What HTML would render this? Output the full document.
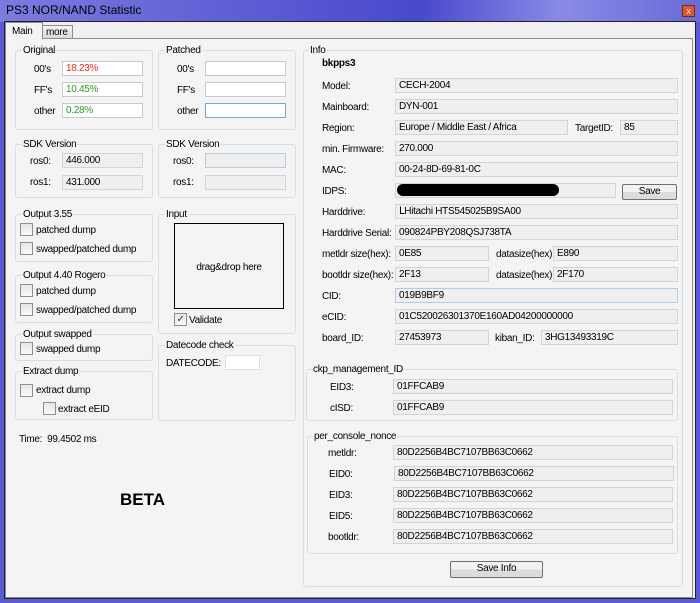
<!DOCTYPE html><html><head><style>
*{margin:0;padding:0;box-sizing:border-box}
body{width:700px;height:603px;position:relative;overflow:hidden;font-family:"Liberation Sans",sans-serif;font-size:10px;letter-spacing:-0.3px;color:#000;background:#5b5bd6}
.a{position:absolute}
.t{position:absolute;white-space:nowrap;line-height:13px}
.g{position:absolute;border:1px solid #d5dfe5;border-radius:3px}
.gl{position:absolute;top:-7px;left:6px;background:#f4f4f4;padding:0 1px;line-height:13px;white-space:nowrap}
.tb{position:absolute;height:15px;border:1px solid #c9c9c9;background:#fff;line-height:13px;padding-left:3px;white-space:nowrap;overflow:hidden}
.ro{background:#efefef;border-color:#d4d4d4}
.cb{position:absolute;width:13px;height:13px;border:1px solid #8f8f8f;background:linear-gradient(#e6e6e6,#fafafa)}
.btn{position:absolute;border:1px solid #707070;border-radius:2px;background:linear-gradient(#f2f2f2 50%,#dcdcdc 50%);text-align:center;line-height:14px}
</style></head><body>
<div class="a" style="left:0;top:0;width:700px;height:22px;background:linear-gradient(90deg,#7b7be0,#4848cc 60%,#8a8ae6 80%,#6a6ad8)"></div>
<div class="t" style="left:6px;top:4px;font-size:12px;letter-spacing:0">PS3 NOR/NAND Statistic</div>
<div class="a" style="left:682px;top:5px;width:13px;height:12px;background:#d9582f;border:1px solid #7a2a10;color:#fff;font-size:9px;text-align:center;line-height:10px">x</div>
<div class="a" style="left:4px;top:21px;width:692px;height:578px;background:#f0f0f0;border:1px solid #222"></div>
<div class="a" style="left:5px;top:38px;width:688px;height:560px;border:1px solid #898c95;background:#f4f4f4"></div>
<div class="a" style="left:5px;top:22px;width:38px;height:17px;border:1px solid #898c95;border-bottom:none;background:#f4f4f4"></div>
<div class="t" style="left:12px;top:25px">Main</div>
<div class="a" style="left:42px;top:25px;width:31px;height:13px;border:1px solid #898c95;border-bottom:none;background:linear-gradient(#f2f2f2,#dcdcdc)"></div>
<div class="t" style="left:46px;top:26px">more</div>

<div class="g" style="left:15px;top:50px;width:138px;height:80px"><span class="gl">Original</span></div>
<div class="t" style="left:34px;top:63px">00's</div><div class="tb" style="left:62px;top:61px;width:81px;color:#f22">18.23%</div>
<div class="t" style="left:34px;top:84px">FF's</div><div class="tb" style="left:62px;top:82px;width:81px;color:#2a9a2a">10.45%</div>
<div class="t" style="left:34px;top:105px">other</div><div class="tb" style="left:62px;top:103px;width:81px;color:#2a9a2a">0.28%</div>
<div class="g" style="left:158px;top:50px;width:138px;height:80px"><span class="gl">Patched</span></div>
<div class="t" style="left:177px;top:63px">00's</div><div class="tb" style="left:205px;top:61px;width:81px"></div>
<div class="t" style="left:177px;top:84px">FF's</div><div class="tb" style="left:205px;top:82px;width:81px"></div>
<div class="t" style="left:177px;top:105px">other</div><div class="tb" style="left:205px;top:103px;width:81px;border-color:#7aa7cf"></div>

<div class="g" style="left:15px;top:144px;width:138px;height:54px"><span class="gl">SDK Version</span></div>
<div class="t" style="left:30px;top:155px">ros0:</div><div class="tb ro" style="left:62px;top:153px;width:81px">446.000</div>
<div class="t" style="left:30px;top:176px">ros1:</div><div class="tb ro" style="left:62px;top:175px;width:81px">431.000</div>
<div class="g" style="left:158px;top:144px;width:138px;height:54px"><span class="gl">SDK Version</span></div>
<div class="t" style="left:173px;top:155px">ros0:</div><div class="tb ro" style="left:205px;top:153px;width:81px;border-color:#b5cbe0"></div>
<div class="t" style="left:173px;top:176px">ros1:</div><div class="tb ro" style="left:205px;top:175px;width:81px"></div>

<div class="g" style="left:15px;top:214px;width:138px;height:48px"><span class="gl">Output 3.55</span></div>
<div class="cb" style="left:20px;top:223px"></div><div class="t" style="left:36px;top:224px">patched dump</div>
<div class="cb" style="left:20px;top:242px"></div><div class="t" style="left:36px;top:243px">swapped/patched dump</div>
<div class="g" style="left:15px;top:275px;width:138px;height:48px"><span class="gl">Output 4.40 Rogero</span></div>
<div class="cb" style="left:20px;top:284px"></div><div class="t" style="left:36px;top:285px">patched dump</div>
<div class="cb" style="left:20px;top:303px"></div><div class="t" style="left:36px;top:304px">swapped/patched dump</div>
<div class="g" style="left:15px;top:334px;width:138px;height:27px"><span class="gl">Output swapped</span></div>
<div class="cb" style="left:20px;top:342px"></div><div class="t" style="left:36px;top:343px">swapped dump</div>
<div class="g" style="left:15px;top:371px;width:138px;height:49px"><span class="gl">Extract dump</span></div>
<div class="cb" style="left:20px;top:384px"></div><div class="t" style="left:36px;top:384px">extract dump</div>
<div class="cb" style="left:43px;top:402px"></div><div class="t" style="left:58px;top:403px">extract eEID</div>

<div class="g" style="left:158px;top:214px;width:138px;height:120px"><span class="gl">Input</span></div>
<div class="a" style="left:174px;top:223px;width:110px;height:86px;border:1px solid #000;background:#f4f4f4"></div>
<div class="t" style="left:174px;top:261px;width:110px;text-align:center">drag&amp;drop here</div>
<div class="cb" style="left:174px;top:313px;font-size:10px;line-height:11px;text-align:center;color:#334">✓</div><div class="t" style="left:189px;top:314px">Validate</div>
<div class="g" style="left:158px;top:345px;width:138px;height:76px"><span class="gl">Datecode check</span></div>
<div class="t" style="left:166px;top:357px">DATECODE:</div><div class="tb" style="left:225px;top:355px;width:35px;border-color:#e0e0e0"></div>

<div class="t" style="left:19px;top:433px">Time:&nbsp; 99.4502 ms</div>
<div class="t" style="left:120px;top:490px;font-size:17px;font-weight:bold;line-height:20px;letter-spacing:0">BETA</div>

<div class="g" style="left:303px;top:50px;width:380px;height:537px"><span class="gl" style="left:5px">Info</span></div>
<div class="t" style="left:322px;top:57px;font-weight:bold">bkpps3</div>
<div class="t" style="left:322px;top:80px">Model:</div><div class="tb ro" style="left:395px;top:78px;width:283px">CECH-2004</div>
<div class="t" style="left:322px;top:101px">Mainboard:</div><div class="tb ro" style="left:395px;top:99px;width:283px">DYN-001</div>
<div class="t" style="left:322px;top:122px">Region:</div><div class="tb ro" style="left:395px;top:120px;width:173px">Europe / Middle East / Africa</div>
<div class="t" style="left:575px;top:122px">TargetID:</div><div class="tb ro" style="left:620px;top:120px;width:58px">85</div>
<div class="t" style="left:322px;top:143px">min. Firmware:</div><div class="tb ro" style="left:395px;top:141px;width:283px">270.000</div>
<div class="t" style="left:322px;top:164px">MAC:</div><div class="tb ro" style="left:395px;top:162px;width:283px">00-24-8D-69-81-0C</div>
<div class="t" style="left:322px;top:185px">IDPS:</div><div class="tb ro" style="left:395px;top:183px;width:221px"></div>
<div class="a" style="left:397px;top:184px;width:162px;height:12px;background:#000;border-radius:6px"></div>
<div class="btn" style="left:622px;top:184px;width:55px;height:16px">Save</div>
<div class="t" style="left:322px;top:206px">Harddrive:</div><div class="tb ro" style="left:395px;top:204px;width:283px">ᒪHitachi HTS545025B9SA00</div>
<div class="t" style="left:322px;top:227px">Harddrive Serial:</div><div class="tb ro" style="left:395px;top:225px;width:283px">090824PBY208QSJ738TA</div>
<div class="t" style="left:322px;top:248px">metldr size(hex):</div><div class="tb ro" style="left:395px;top:246px;width:94px">0E85</div>
<div class="t" style="left:496px;top:248px">datasize(hex):</div><div class="tb ro" style="left:553px;top:246px;width:125px">E890</div>
<div class="t" style="left:322px;top:269px">bootldr size(hex):</div><div class="tb ro" style="left:395px;top:267px;width:94px">2F13</div>
<div class="t" style="left:496px;top:269px">datasize(hex):</div><div class="tb ro" style="left:553px;top:267px;width:125px">2F170</div>
<div class="t" style="left:322px;top:290px">CID:</div><div class="tb ro" style="left:395px;top:288px;width:283px;border-color:#b5cbe0">019B9BF9</div>
<div class="t" style="left:322px;top:311px">eCID:</div><div class="tb ro" style="left:395px;top:309px;width:283px">01C520026301370E160AD04200000000</div>
<div class="t" style="left:322px;top:332px">board_ID:</div><div class="tb ro" style="left:395px;top:330px;width:94px">27453973</div>
<div class="t" style="left:495px;top:332px">kiban_ID:</div><div class="tb ro" style="left:541px;top:330px;width:137px">3HG13493319C</div>

<div class="g" style="left:306px;top:369px;width:372px;height:52px"><span class="gl" style="left:5px">ckp_management_ID</span></div>
<div class="t" style="left:330px;top:381px">EID3:</div><div class="tb ro" style="left:393px;top:379px;width:280px">01FFCAB9</div>
<div class="t" style="left:330px;top:402px">cISD:</div><div class="tb ro" style="left:393px;top:400px;width:280px">01FFCAB9</div>
<div class="g" style="left:307px;top:436px;width:371px;height:118px"><span class="gl" style="left:5px">per_console_nonce</span></div>
<div class="t" style="left:328px;top:447px">metldr:</div><div class="tb ro" style="left:393px;top:445px;width:280px">80D2256B4BC7107BB63C0662</div>
<div class="t" style="left:329px;top:468px">EID0:</div><div class="tb ro" style="left:394px;top:466px;width:280px">80D2256B4BC7107BB63C0662</div>
<div class="t" style="left:329px;top:489px">EID3:</div><div class="tb ro" style="left:393px;top:487px;width:280px">80D2256B4BC7107BB63C0662</div>
<div class="t" style="left:329px;top:510px">EID5:</div><div class="tb ro" style="left:393px;top:508px;width:280px">80D2256B4BC7107BB63C0662</div>
<div class="t" style="left:328px;top:531px">bootldr:</div><div class="tb ro" style="left:393px;top:529px;width:280px">80D2256B4BC7107BB63C0662</div>
<div class="btn" style="left:450px;top:561px;width:93px;height:17px">Save Info</div>
</body></html>
